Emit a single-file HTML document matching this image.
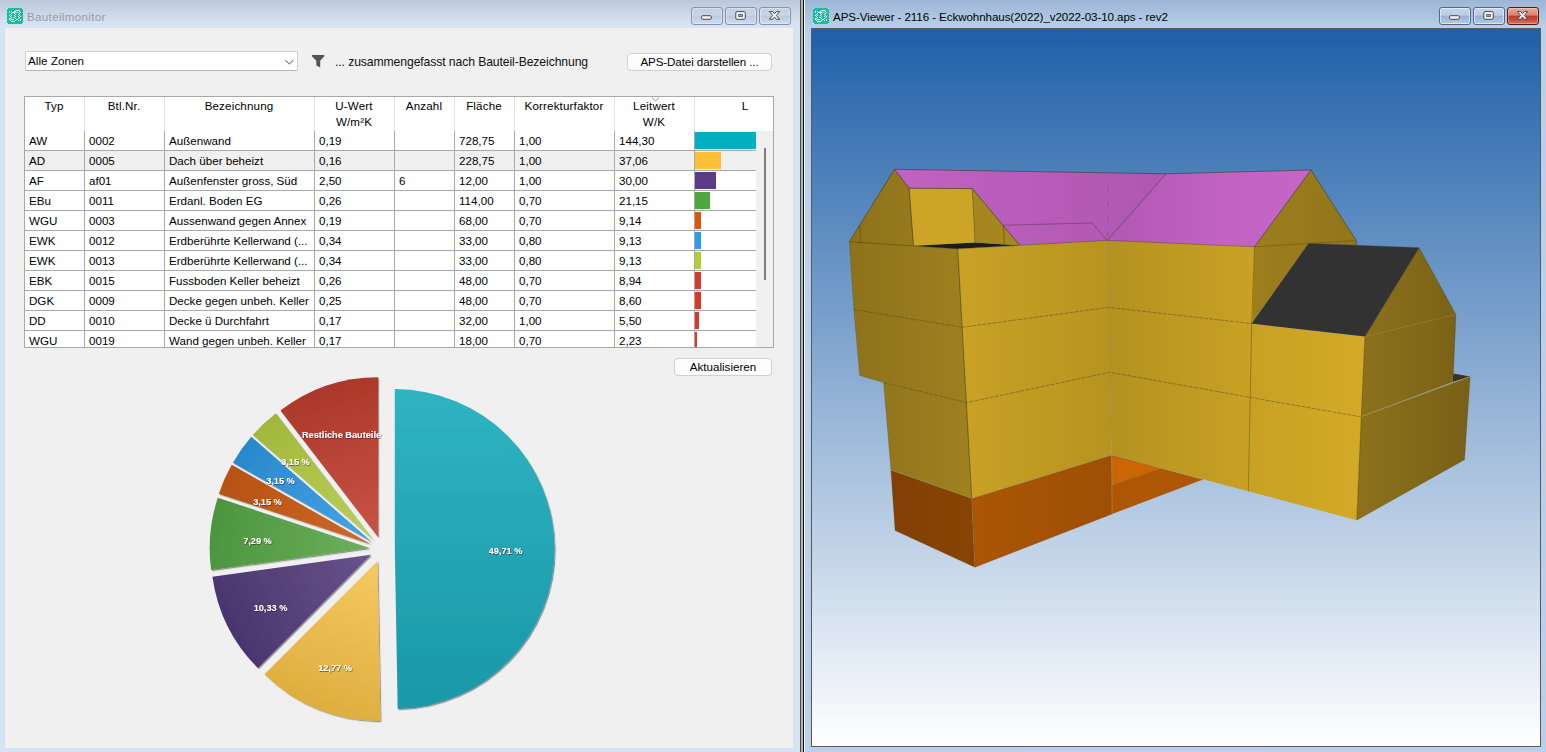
<!DOCTYPE html>
<html><head><meta charset="utf-8"><title>Bauteilmonitor</title>
<style>
*{box-sizing:border-box;margin:0;padding:0}
html,body{width:1546px;height:752px;overflow:hidden;background:#d6e3f3;font-family:"Liberation Sans",sans-serif;font-size:11.6px;color:#000}
.abs{position:absolute}
#lw{position:absolute;left:0;top:0;width:800px;height:752px;background:#d6e3f3}
#lw .tb{position:absolute;left:0;top:0;width:800px;height:28px;background:linear-gradient(#b9c7d9,#cfdbea 55%,#d9e5f4)}
#lw .ct{position:absolute;left:5px;top:28px;width:788px;height:720px;background:#f0f0f0}
.title{position:absolute;top:9px;font-size:11.6px;line-height:15px;white-space:nowrap}
#sep{position:absolute;left:800px;top:0;width:5px;height:752px;background:linear-gradient(90deg,#4a4a4a 0,#4a4a4a 1px,#b2b2b2 1px,#b2b2b2 3px,#111 3px,#111 4px,#f4f6fa 4px)}
#rw{position:absolute;left:805px;top:0;width:741px;height:752px;background:linear-gradient(#9db6d6,#b9cfea 28px,#bad0ea)}
#view{position:absolute;left:811px;top:28px;width:730px;height:719px;border:1px solid #5a5a5a}
.wb{position:absolute;top:7px;width:32px;height:18px;border:1px solid #8591b4;border-radius:3px;background:linear-gradient(#c4d0e2,#c9d5e6 45%,#bccadf 50%,#d0dcec);box-shadow:inset 0 0 0 1px rgba(255,255,255,.35)}
.wb svg{position:absolute;left:-1px;top:-1px}
.wb.act{border-color:#5b6480;background:linear-gradient(#c3d4ea,#bccee6 45%,#9ab2d2 50%,#b4c9e3);box-shadow:inset 0 0 0 1px rgba(255,255,255,.55)}
.wb.cls{border-color:#5a1420;background:linear-gradient(#e8a898,#da826e 45%,#bc3b23 50%,#c24a33 70%,#d07762);box-shadow:inset 0 0 0 1px rgba(255,255,255,.3)}
.combo{position:absolute;left:25px;top:51px;width:273px;height:20px;background:#fff;border:1px solid #cfcfcf;border-bottom-color:#b5b5b5;border-radius:2px;line-height:18px;padding-left:2px;font-size:11.6px;letter-spacing:.07px}
.btn{position:absolute;background:#fdfdfd;border:1px solid #d0d0d0;border-radius:4px;text-align:center;font-size:11.6px;white-space:nowrap}
.lbl{position:absolute;left:335px;top:55px;font-size:12.2px;letter-spacing:-.1px;line-height:15px;white-space:nowrap;color:#111}
.tbl{position:absolute;left:24px;top:96px;width:750px;height:252px;background:#fff;border:1px solid #a8a8a8;overflow:hidden}
.tbl>*{position:absolute}
.th{top:-1px;height:35px;text-align:center;line-height:16px;padding-top:2px;font-size:11.6px;letter-spacing:.15px;white-space:nowrap}
.hsep{top:0;width:1px;height:34px;background:#e4e4e4}
.tr{left:-1px;width:733px;height:20px;border-bottom:1px solid #a9a9a9}
.tr.hov{background:#f0f0f0}
.tr>*{position:absolute}
.td{top:0;height:19px;line-height:19px;padding-left:5px;white-space:nowrap;overflow:hidden;font-size:11.6px}
.bar{top:1px;height:17px}
.vsep{top:34px;width:1px;height:220px;background:#a9a9a9}
.sb{left:731px;top:34px;width:17px;height:217px;background:#f0f0f0}
.thumb{position:absolute;left:8px;top:17px;width:2px;height:132px;background:#7c7c7c}
.pl{font-family:"Liberation Sans",sans-serif;font-weight:bold;font-size:9.2px;fill:#fff;text-anchor:middle;filter:url(#tsh)}
</style></head><body>
<div id="lw">
<div class="tb"></div>
<div class="abs" style="left:7px;top:8px;width:16px;height:16px"><svg width="16" height="16" viewBox="0 0 16 16" shape-rendering="crispEdges"><rect x="0" y="0" width="16" height="16" fill="#1cbc9e"/><rect x="9" y="2" width="1" height="1" fill="#fff" fill-opacity="0.92"/><rect x="10" y="2" width="1" height="1" fill="#fff" fill-opacity="0.92"/><rect x="11" y="2" width="1" height="1" fill="#fff" fill-opacity="0.92"/><rect x="2" y="3" width="1" height="1" fill="#fff" fill-opacity="0.92"/><rect x="4" y="3" width="1" height="1" fill="#fff" fill-opacity="0.92"/><rect x="7" y="3" width="1" height="1" fill="#fff" fill-opacity="0.92"/><rect x="12" y="3" width="1" height="1" fill="#fff" fill-opacity="0.92"/><rect x="5" y="4" width="1" height="1" fill="#fff" fill-opacity="0.92"/><rect x="6" y="4" width="1" height="1" fill="#fff" fill-opacity="0.92"/><rect x="7" y="4" width="1" height="1" fill="#fff" fill-opacity="0.92"/><rect x="13" y="4" width="1" height="1" fill="#fff" fill-opacity="0.92"/><rect x="4" y="5" width="1" height="1" fill="#fff" fill-opacity="0.92"/><rect x="7" y="5" width="1" height="1" fill="#fff" fill-opacity="0.92"/><rect x="12" y="5" width="1" height="1" fill="#fff" fill-opacity="0.92"/><rect x="3" y="6" width="1" height="1" fill="#fff" fill-opacity="0.92"/><rect x="8" y="6" width="1" height="1" fill="#fff" fill-opacity="0.92"/><rect x="11" y="6" width="1" height="1" fill="#fff" fill-opacity="0.92"/><rect x="2" y="7" width="1" height="1" fill="#fff" fill-opacity="0.92"/><rect x="4" y="7" width="1" height="1" fill="#fff" fill-opacity="0.92"/><rect x="7" y="7" width="1" height="1" fill="#fff" fill-opacity="0.92"/><rect x="12" y="7" width="1" height="1" fill="#fff" fill-opacity="0.92"/><rect x="3" y="8" width="1" height="1" fill="#fff" fill-opacity="0.92"/><rect x="8" y="8" width="1" height="1" fill="#fff" fill-opacity="0.92"/><rect x="11" y="8" width="1" height="1" fill="#fff" fill-opacity="0.92"/><rect x="13" y="8" width="1" height="1" fill="#fff" fill-opacity="0.92"/><rect x="4" y="9" width="1" height="1" fill="#fff" fill-opacity="0.92"/><rect x="6" y="9" width="1" height="1" fill="#fff" fill-opacity="0.92"/><rect x="7" y="9" width="1" height="1" fill="#fff" fill-opacity="0.92"/><rect x="12" y="9" width="1" height="1" fill="#fff" fill-opacity="0.92"/><rect x="2" y="10" width="1" height="1" fill="#fff" fill-opacity="0.92"/><rect x="3" y="10" width="1" height="1" fill="#fff" fill-opacity="0.92"/><rect x="8" y="10" width="1" height="1" fill="#fff" fill-opacity="0.92"/><rect x="11" y="10" width="1" height="1" fill="#fff" fill-opacity="0.92"/><rect x="2" y="11" width="1" height="1" fill="#fff" fill-opacity="0.92"/><rect x="4" y="11" width="1" height="1" fill="#fff" fill-opacity="0.92"/><rect x="5" y="11" width="1" height="1" fill="#fff" fill-opacity="0.92"/><rect x="6" y="11" width="1" height="1" fill="#fff" fill-opacity="0.92"/><rect x="9" y="11" width="1" height="1" fill="#fff" fill-opacity="0.92"/><rect x="10" y="11" width="1" height="1" fill="#fff" fill-opacity="0.92"/><rect x="13" y="11" width="1" height="1" fill="#fff" fill-opacity="0.92"/><rect x="3" y="12" width="1" height="1" fill="#fff" fill-opacity="0.92"/><rect x="8" y="12" width="1" height="1" fill="#fff" fill-opacity="0.92"/><rect x="11" y="12" width="1" height="1" fill="#fff" fill-opacity="0.92"/><rect x="13" y="12" width="1" height="1" fill="#fff" fill-opacity="0.92"/><rect x="4" y="13" width="1" height="1" fill="#fff" fill-opacity="0.92"/><rect x="5" y="13" width="1" height="1" fill="#fff" fill-opacity="0.92"/><rect x="6" y="13" width="1" height="1" fill="#fff" fill-opacity="0.92"/><rect x="7" y="13" width="1" height="1" fill="#fff" fill-opacity="0.92"/><rect x="8" y="3" width="1" height="1" fill="#fff" fill-opacity="0.55"/><rect x="2" y="4" width="1" height="1" fill="#fff" fill-opacity="0.55"/><rect x="8" y="4" width="1" height="1" fill="#fff" fill-opacity="0.55"/><rect x="9" y="4" width="1" height="1" fill="#fff" fill-opacity="0.55"/><rect x="10" y="4" width="1" height="1" fill="#fff" fill-opacity="0.55"/><rect x="11" y="4" width="1" height="1" fill="#fff" fill-opacity="0.55"/><rect x="8" y="2" width="1" height="1" fill="#fff" fill-opacity="0.55"/><rect x="12" y="2" width="1" height="1" fill="#fff" fill-opacity="0.55"/><rect x="0" y="0" width="1" height="1" fill="#f0f4fa"/><rect x="15" y="0" width="1" height="1" fill="#f0f4fa"/><rect x="0" y="15" width="1" height="1" fill="#f0f4fa"/><rect x="15" y="15" width="1" height="1" fill="#f0f4fa"/></svg></div>
<div class="title" style="left:27px;color:#9a9a9a;letter-spacing:.33px">Bauteilmonitor</div>
<div class="wb" style="left:691px"><svg width="32" height="18" viewBox="0 0 32 18"><rect x="10.6" y="8.7" width="9.7" height="3.6" rx="1" fill="#f4f4f4" stroke="#45485a" stroke-width="1"/></svg></div>
<div class="wb" style="left:725px"><svg width="32" height="18" viewBox="0 0 32 18"><rect x="10.8" y="4.6" width="9.5" height="7.7" rx="1" fill="#f4f4f4" stroke="#45485a" stroke-width="1"/><rect x="13.7" y="7.6" width="3.7" height="1.9" fill="#8fa3c4" stroke="#45485a" stroke-width="0.8"/></svg></div>
<div class="wb" style="left:759px"><svg width="32" height="18" viewBox="0 0 32 18"><path d="M10.4,4.6 L13.7,4.6 L15.5,6.8 L17.3,4.6 L20.6,4.6 L17.4,8.45 L20.6,12.3 L17.3,12.3 L15.5,10.1 L13.7,12.3 L10.4,12.3 L13.6,8.45 Z" fill="#f4f4f4" stroke="#45485a" stroke-width="1" stroke-linejoin="round"/></svg></div>
<div class="ct"></div>
<div class="combo">Alle Zonen<svg class="abs" style="left:258px;top:7px" width="11" height="7" viewBox="0 0 11 7"><path d="M1.2,1 L5.3,5 L9.4,1" fill="none" stroke="#444" stroke-width="1"/></svg></div>
<svg class="abs" style="left:311px;top:54px" width="14" height="15" viewBox="0 0 14 15"><path d="M0.9,1 L13.3,1 L13.3,2.2 L9.2,6.8 L9.2,13.6 L5.3,11.4 L5.3,6.8 L0.9,2.2 Z" fill="#555"/></svg>
<div class="lbl">... zusammengefasst nach Bauteil-Bezeichnung</div>
<div class="btn" style="left:627px;top:53px;width:145px;height:18px;line-height:16px;letter-spacing:-.1px">APS-Datei darstellen ...</div>
<div class="tbl">
<div class="th" style="left:-1px;width:60px">Typ</div>
<div class="th" style="left:59px;width:80px">Btl.Nr.</div>
<div class="hsep" style="left:59px"></div>
<div class="th" style="left:139px;width:150px">Bezeichnung</div>
<div class="hsep" style="left:139px"></div>
<div class="th" style="left:289px;width:80px">U-Wert<br>W/m²K</div>
<div class="hsep" style="left:289px"></div>
<div class="th" style="left:369px;width:60px">Anzahl</div>
<div class="hsep" style="left:369px"></div>
<div class="th" style="left:429px;width:60px">Fläche</div>
<div class="hsep" style="left:429px"></div>
<div class="th" style="left:489px;width:100px">Korrekturfaktor</div>
<div class="hsep" style="left:489px"></div>
<div class="th" style="left:589px;width:80px">Leitwert<br>W/K</div>
<div class="hsep" style="left:589px"></div>
<div class="th" style="left:669px;width:102px">L</div>
<div class="hsep" style="left:669px"></div>
<svg style="left:625.5px;top:0px" width="9" height="5" viewBox="0 0 9 5"><path d="M0.8,0.6 L4.5,4 L8.2,0.6" fill="none" stroke="#8a8a8a" stroke-width="0.9"/></svg>
<div class="tr" style="top:34px">
<div class="td" style="left:0px;width:59px">AW</div>
<div class="td" style="left:60px;width:79px">0002</div>
<div class="td" style="left:140px;width:149px">Außenwand</div>
<div class="td" style="left:290px;width:79px">0,19</div>
<div class="td" style="left:370px;width:59px"></div>
<div class="td" style="left:430px;width:59px">728,75</div>
<div class="td" style="left:490px;width:99px">1,00</div>
<div class="td" style="left:590px;width:79px">144,30</div>
<div class="bar" style="left:671px;width:61.5px;background:#00b0c0"></div>
</div>
<div class="tr hov" style="top:54px">
<div class="td" style="left:0px;width:59px">AD</div>
<div class="td" style="left:60px;width:79px">0005</div>
<div class="td" style="left:140px;width:149px">Dach über beheizt</div>
<div class="td" style="left:290px;width:79px">0,16</div>
<div class="td" style="left:370px;width:59px"></div>
<div class="td" style="left:430px;width:59px">228,75</div>
<div class="td" style="left:490px;width:99px">1,00</div>
<div class="td" style="left:590px;width:79px">37,06</div>
<div class="bar" style="left:671px;width:25.8px;background:#fdbf35"></div>
</div>
<div class="tr" style="top:74px">
<div class="td" style="left:0px;width:59px">AF</div>
<div class="td" style="left:60px;width:79px">af01</div>
<div class="td" style="left:140px;width:149px">Außenfenster gross, Süd</div>
<div class="td" style="left:290px;width:79px">2,50</div>
<div class="td" style="left:370px;width:59px">6</div>
<div class="td" style="left:430px;width:59px">12,00</div>
<div class="td" style="left:490px;width:99px">1,00</div>
<div class="td" style="left:590px;width:79px">30,00</div>
<div class="bar" style="left:671px;width:20.6px;background:#5a3b84"></div>
</div>
<div class="tr" style="top:94px">
<div class="td" style="left:0px;width:59px">EBu</div>
<div class="td" style="left:60px;width:79px">0011</div>
<div class="td" style="left:140px;width:149px">Erdanl. Boden EG</div>
<div class="td" style="left:290px;width:79px">0,26</div>
<div class="td" style="left:370px;width:59px"></div>
<div class="td" style="left:430px;width:59px">114,00</div>
<div class="td" style="left:490px;width:99px">0,70</div>
<div class="td" style="left:590px;width:79px">21,15</div>
<div class="bar" style="left:671px;width:14.6px;background:#4ca73c"></div>
</div>
<div class="tr" style="top:114px">
<div class="td" style="left:0px;width:59px">WGU</div>
<div class="td" style="left:60px;width:79px">0003</div>
<div class="td" style="left:140px;width:149px">Aussenwand gegen Annex</div>
<div class="td" style="left:290px;width:79px">0,19</div>
<div class="td" style="left:370px;width:59px"></div>
<div class="td" style="left:430px;width:59px">68,00</div>
<div class="td" style="left:490px;width:99px">0,70</div>
<div class="td" style="left:590px;width:79px">9,14</div>
<div class="bar" style="left:671px;width:6.0px;background:#d9590c"></div>
</div>
<div class="tr" style="top:134px">
<div class="td" style="left:0px;width:59px">EWK</div>
<div class="td" style="left:60px;width:79px">0012</div>
<div class="td" style="left:140px;width:149px">Erdberührte Kellerwand (...</div>
<div class="td" style="left:290px;width:79px">0,34</div>
<div class="td" style="left:370px;width:59px"></div>
<div class="td" style="left:430px;width:59px">33,00</div>
<div class="td" style="left:490px;width:99px">0,80</div>
<div class="td" style="left:590px;width:79px">9,13</div>
<div class="bar" style="left:671px;width:6.0px;background:#2e9be6"></div>
</div>
<div class="tr" style="top:154px">
<div class="td" style="left:0px;width:59px">EWK</div>
<div class="td" style="left:60px;width:79px">0013</div>
<div class="td" style="left:140px;width:149px">Erdberührte Kellerwand (...</div>
<div class="td" style="left:290px;width:79px">0,34</div>
<div class="td" style="left:370px;width:59px"></div>
<div class="td" style="left:430px;width:59px">33,00</div>
<div class="td" style="left:490px;width:99px">0,80</div>
<div class="td" style="left:590px;width:79px">9,13</div>
<div class="bar" style="left:671px;width:6.0px;background:#b4cd32"></div>
</div>
<div class="tr" style="top:174px">
<div class="td" style="left:0px;width:59px">EBK</div>
<div class="td" style="left:60px;width:79px">0015</div>
<div class="td" style="left:140px;width:149px">Fussboden Keller beheizt</div>
<div class="td" style="left:290px;width:79px">0,26</div>
<div class="td" style="left:370px;width:59px"></div>
<div class="td" style="left:430px;width:59px">48,00</div>
<div class="td" style="left:490px;width:99px">0,70</div>
<div class="td" style="left:590px;width:79px">8,94</div>
<div class="bar" style="left:671px;width:5.8px;background:#d63b2a"></div>
</div>
<div class="tr" style="top:194px">
<div class="td" style="left:0px;width:59px">DGK</div>
<div class="td" style="left:60px;width:79px">0009</div>
<div class="td" style="left:140px;width:149px">Decke gegen unbeh. Keller</div>
<div class="td" style="left:290px;width:79px">0,25</div>
<div class="td" style="left:370px;width:59px"></div>
<div class="td" style="left:430px;width:59px">48,00</div>
<div class="td" style="left:490px;width:99px">0,70</div>
<div class="td" style="left:590px;width:79px">8,60</div>
<div class="bar" style="left:671px;width:5.8px;background:#d63b2a"></div>
</div>
<div class="tr" style="top:214px">
<div class="td" style="left:0px;width:59px">DD</div>
<div class="td" style="left:60px;width:79px">0010</div>
<div class="td" style="left:140px;width:149px">Decke ü Durchfahrt</div>
<div class="td" style="left:290px;width:79px">0,17</div>
<div class="td" style="left:370px;width:59px"></div>
<div class="td" style="left:430px;width:59px">32,00</div>
<div class="td" style="left:490px;width:99px">1,00</div>
<div class="td" style="left:590px;width:79px">5,50</div>
<div class="bar" style="left:671px;width:4.0px;background:#d63b2a"></div>
</div>
<div class="tr" style="top:234px">
<div class="td" style="left:0px;width:59px">WGU</div>
<div class="td" style="left:60px;width:79px">0019</div>
<div class="td" style="left:140px;width:149px">Wand gegen unbeh. Keller</div>
<div class="td" style="left:290px;width:79px">0,17</div>
<div class="td" style="left:370px;width:59px"></div>
<div class="td" style="left:430px;width:59px">18,00</div>
<div class="td" style="left:490px;width:99px">0,70</div>
<div class="td" style="left:590px;width:79px">2,23</div>
<div class="bar" style="left:671px;width:2.0px;background:#d63b2a"></div>
</div>
<div class="vsep" style="left:59px"></div>
<div class="vsep" style="left:139px"></div>
<div class="vsep" style="left:289px"></div>
<div class="vsep" style="left:369px"></div>
<div class="vsep" style="left:429px"></div>
<div class="vsep" style="left:489px"></div>
<div class="vsep" style="left:589px"></div>
<div class="vsep" style="left:669px"></div>
<div class="sb"><div class="thumb"></div></div>
</div>
<div class="btn" style="left:674px;top:358px;width:98px;height:18px;line-height:16px">Aktualisieren</div>
<svg class="abs" style="left:0;top:0" width="800" height="752" viewBox="0 0 800 752">
<defs><linearGradient id="pg0" gradientUnits="userSpaceOnUse" x1="394.8" y1="389.1" x2="394.8" y2="709.1"><stop offset="0" stop-color="#2fb4c1"/><stop offset="1" stop-color="#1a98a7"/></linearGradient><linearGradient id="pg1" gradientUnits="userSpaceOnUse" x1="317.7" y1="709.3" x2="377.5" y2="560.9"><stop offset="0" stop-color="#deae3e"/><stop offset="1" stop-color="#f6ca62"/></linearGradient><linearGradient id="pg2" gradientUnits="userSpaceOnUse" x1="227.7" y1="626.2" x2="370.9" y2="554.8"><stop offset="0" stop-color="#4a356e"/><stop offset="1" stop-color="#6a538c"/></linearGradient><linearGradient id="pg3" gradientUnits="userSpaceOnUse" x1="210.3" y1="533.4" x2="369.7" y2="548.0"><stop offset="0" stop-color="#4c953e"/><stop offset="1" stop-color="#6db05c"/></linearGradient><linearGradient id="pg4" gradientUnits="userSpaceOnUse" x1="224.6" y1="478.9" x2="370.7" y2="544.1"><stop offset="0" stop-color="#b65212"/><stop offset="1" stop-color="#cf6a28"/></linearGradient><linearGradient id="pg5" gradientUnits="userSpaceOnUse" x1="241.5" y1="449.3" x2="371.9" y2="541.9"><stop offset="0" stop-color="#2a88cc"/><stop offset="1" stop-color="#45a5e6"/></linearGradient><linearGradient id="pg6" gradientUnits="userSpaceOnUse" x1="263.8" y1="423.6" x2="373.6" y2="540.0"><stop offset="0" stop-color="#a2b83c"/><stop offset="1" stop-color="#bcd05a"/></linearGradient><linearGradient id="pg7" gradientUnits="userSpaceOnUse" x1="326.5" y1="385.8" x2="378.1" y2="537.3"><stop offset="0" stop-color="#ab382a"/><stop offset="1" stop-color="#c95445"/></linearGradient><filter id="tsh" x="-10%" y="-30%" width="120%" height="160%"><feDropShadow dx="0.6" dy="0.7" stdDeviation="0.35" flood-color="#3a1a1a" flood-opacity="0.75"/></filter><filter id="psh" x="-10%" y="-10%" width="120%" height="120%"><feDropShadow dx="1.1" dy="1.2" stdDeviation="0.7" flood-color="#000" flood-opacity="0.4"/></filter></defs>
<path d="M394.80,549.09 L394.80,389.09 A160.0,160.0 0 0 1 397.71,709.06 Z" fill="url(#pg0)" filter="url(#psh)"/>
<path d="M377.49,560.89 L380.41,720.86 A160.0,160.0 0 0 1 264.50,674.17 Z" fill="url(#pg1)" filter="url(#psh)"/>
<path d="M370.92,554.82 L257.93,668.10 A160.0,160.0 0 0 1 212.43,576.76 Z" fill="url(#pg2)" filter="url(#psh)"/>
<path d="M369.65,548.05 L211.16,570.00 A160.0,160.0 0 0 1 217.80,497.65 Z" fill="url(#pg3)" filter="url(#psh)"/>
<path d="M370.69,544.07 L218.84,493.67 A160.0,160.0 0 0 1 231.71,464.80 Z" fill="url(#pg4)" filter="url(#psh)"/>
<path d="M371.93,541.91 L232.94,462.63 A160.0,160.0 0 0 1 251.25,436.85 Z" fill="url(#pg5)" filter="url(#psh)"/>
<path d="M373.56,540.03 L252.88,434.97 A160.0,160.0 0 0 1 275.89,413.30 Z" fill="url(#pg6)" filter="url(#psh)"/>
<path d="M378.14,537.27 L280.47,410.54 A160.0,160.0 0 0 1 378.14,377.27 Z" fill="url(#pg7)" filter="url(#psh)"/>
<text class="pl" x="505.5" y="553.7">49,71 %</text>
<text class="pl" x="335" y="670.7">12,77 %</text>
<text class="pl" x="270.5" y="610.7">10,33 %</text>
<text class="pl" x="257.5" y="543.7">7,29 %</text>
<text class="pl" x="267.5" y="504.7">3,15 %</text>
<text class="pl" x="280.5" y="484.2">3,15 %</text>
<text class="pl" x="295.5" y="464.7">3,15 %</text>
<text class="pl" x="341.5" y="437.7">Restliche Bauteile</text>
</svg>
</div>
<div id="sep"></div>
<div id="rw">
<div class="abs" style="left:8px;top:8px;width:16px;height:16px"><svg width="16" height="16" viewBox="0 0 16 16" shape-rendering="crispEdges"><rect x="0" y="0" width="16" height="16" fill="#1cbc9e"/><rect x="9" y="2" width="1" height="1" fill="#fff" fill-opacity="0.92"/><rect x="10" y="2" width="1" height="1" fill="#fff" fill-opacity="0.92"/><rect x="11" y="2" width="1" height="1" fill="#fff" fill-opacity="0.92"/><rect x="2" y="3" width="1" height="1" fill="#fff" fill-opacity="0.92"/><rect x="4" y="3" width="1" height="1" fill="#fff" fill-opacity="0.92"/><rect x="7" y="3" width="1" height="1" fill="#fff" fill-opacity="0.92"/><rect x="12" y="3" width="1" height="1" fill="#fff" fill-opacity="0.92"/><rect x="5" y="4" width="1" height="1" fill="#fff" fill-opacity="0.92"/><rect x="6" y="4" width="1" height="1" fill="#fff" fill-opacity="0.92"/><rect x="7" y="4" width="1" height="1" fill="#fff" fill-opacity="0.92"/><rect x="13" y="4" width="1" height="1" fill="#fff" fill-opacity="0.92"/><rect x="4" y="5" width="1" height="1" fill="#fff" fill-opacity="0.92"/><rect x="7" y="5" width="1" height="1" fill="#fff" fill-opacity="0.92"/><rect x="12" y="5" width="1" height="1" fill="#fff" fill-opacity="0.92"/><rect x="3" y="6" width="1" height="1" fill="#fff" fill-opacity="0.92"/><rect x="8" y="6" width="1" height="1" fill="#fff" fill-opacity="0.92"/><rect x="11" y="6" width="1" height="1" fill="#fff" fill-opacity="0.92"/><rect x="2" y="7" width="1" height="1" fill="#fff" fill-opacity="0.92"/><rect x="4" y="7" width="1" height="1" fill="#fff" fill-opacity="0.92"/><rect x="7" y="7" width="1" height="1" fill="#fff" fill-opacity="0.92"/><rect x="12" y="7" width="1" height="1" fill="#fff" fill-opacity="0.92"/><rect x="3" y="8" width="1" height="1" fill="#fff" fill-opacity="0.92"/><rect x="8" y="8" width="1" height="1" fill="#fff" fill-opacity="0.92"/><rect x="11" y="8" width="1" height="1" fill="#fff" fill-opacity="0.92"/><rect x="13" y="8" width="1" height="1" fill="#fff" fill-opacity="0.92"/><rect x="4" y="9" width="1" height="1" fill="#fff" fill-opacity="0.92"/><rect x="6" y="9" width="1" height="1" fill="#fff" fill-opacity="0.92"/><rect x="7" y="9" width="1" height="1" fill="#fff" fill-opacity="0.92"/><rect x="12" y="9" width="1" height="1" fill="#fff" fill-opacity="0.92"/><rect x="2" y="10" width="1" height="1" fill="#fff" fill-opacity="0.92"/><rect x="3" y="10" width="1" height="1" fill="#fff" fill-opacity="0.92"/><rect x="8" y="10" width="1" height="1" fill="#fff" fill-opacity="0.92"/><rect x="11" y="10" width="1" height="1" fill="#fff" fill-opacity="0.92"/><rect x="2" y="11" width="1" height="1" fill="#fff" fill-opacity="0.92"/><rect x="4" y="11" width="1" height="1" fill="#fff" fill-opacity="0.92"/><rect x="5" y="11" width="1" height="1" fill="#fff" fill-opacity="0.92"/><rect x="6" y="11" width="1" height="1" fill="#fff" fill-opacity="0.92"/><rect x="9" y="11" width="1" height="1" fill="#fff" fill-opacity="0.92"/><rect x="10" y="11" width="1" height="1" fill="#fff" fill-opacity="0.92"/><rect x="13" y="11" width="1" height="1" fill="#fff" fill-opacity="0.92"/><rect x="3" y="12" width="1" height="1" fill="#fff" fill-opacity="0.92"/><rect x="8" y="12" width="1" height="1" fill="#fff" fill-opacity="0.92"/><rect x="11" y="12" width="1" height="1" fill="#fff" fill-opacity="0.92"/><rect x="13" y="12" width="1" height="1" fill="#fff" fill-opacity="0.92"/><rect x="4" y="13" width="1" height="1" fill="#fff" fill-opacity="0.92"/><rect x="5" y="13" width="1" height="1" fill="#fff" fill-opacity="0.92"/><rect x="6" y="13" width="1" height="1" fill="#fff" fill-opacity="0.92"/><rect x="7" y="13" width="1" height="1" fill="#fff" fill-opacity="0.92"/><rect x="8" y="3" width="1" height="1" fill="#fff" fill-opacity="0.55"/><rect x="2" y="4" width="1" height="1" fill="#fff" fill-opacity="0.55"/><rect x="8" y="4" width="1" height="1" fill="#fff" fill-opacity="0.55"/><rect x="9" y="4" width="1" height="1" fill="#fff" fill-opacity="0.55"/><rect x="10" y="4" width="1" height="1" fill="#fff" fill-opacity="0.55"/><rect x="11" y="4" width="1" height="1" fill="#fff" fill-opacity="0.55"/><rect x="8" y="2" width="1" height="1" fill="#fff" fill-opacity="0.55"/><rect x="12" y="2" width="1" height="1" fill="#fff" fill-opacity="0.55"/><rect x="0" y="0" width="1" height="1" fill="#f0f4fa"/><rect x="15" y="0" width="1" height="1" fill="#f0f4fa"/><rect x="0" y="15" width="1" height="1" fill="#f0f4fa"/><rect x="15" y="15" width="1" height="1" fill="#f0f4fa"/></svg></div>
<div class="title" style="left:28px;color:#000;letter-spacing:-.085px">APS-Viewer - 2116 - Eckwohnhaus(2022)_v2022-03-10.aps - rev2</div>
</div>
<div class="wb act" style="left:1439px"><svg width="32" height="18" viewBox="0 0 32 18"><rect x="10.6" y="8.7" width="9.7" height="3.6" rx="1" fill="#f4f4f4" stroke="#45485a" stroke-width="1"/></svg></div>
<div class="wb act" style="left:1473px"><svg width="32" height="18" viewBox="0 0 32 18"><rect x="10.8" y="4.6" width="9.5" height="7.7" rx="1" fill="#f4f4f4" stroke="#45485a" stroke-width="1"/><rect x="13.7" y="7.6" width="3.7" height="1.9" fill="#8fa3c4" stroke="#45485a" stroke-width="0.8"/></svg></div>
<div class="wb act cls" style="left:1507px"><svg width="32" height="18" viewBox="0 0 32 18"><path d="M10.4,4.6 L13.7,4.6 L15.5,6.8 L17.3,4.6 L20.6,4.6 L17.4,8.45 L20.6,12.3 L17.3,12.3 L15.5,10.1 L13.7,12.3 L10.4,12.3 L13.6,8.45 Z" fill="#f4f4f4" stroke="#45485a" stroke-width="1" stroke-linejoin="round"/></svg></div>
<div id="view"><svg class="abs" style="left:-812px;top:-29px" width="1546" height="752" viewBox="0 0 1546 752">
<rect x="812" y="29" width="728" height="717" fill="url(#sky)"/>
<defs>
<linearGradient id="sky" x1="0" y1="0" x2="0" y2="1"><stop offset="0" stop-color="#1f60a9"/><stop offset="1" stop-color="#ffffff"/></linearGradient>
<linearGradient id="gLeft" gradientUnits="userSpaceOnUse" x1="850" y1="0" x2="972" y2="0"><stop offset="0" stop-color="#8d721b"/><stop offset="1" stop-color="#a08120"/></linearGradient>
<linearGradient id="gFL" gradientUnits="userSpaceOnUse" x1="958" y1="0" x2="1110" y2="0"><stop offset="0" stop-color="#c9a225"/><stop offset="1" stop-color="#b79420"/></linearGradient>
<linearGradient id="gFR" gradientUnits="userSpaceOnUse" x1="1108" y1="0" x2="1252" y2="0"><stop offset="0" stop-color="#b49120"/><stop offset="1" stop-color="#c9a224"/></linearGradient>
<linearGradient id="gAF" gradientUnits="userSpaceOnUse" x1="1250" y1="0" x2="1362" y2="0"><stop offset="0" stop-color="#c8a124"/><stop offset="1" stop-color="#d2aa27"/></linearGradient>
<linearGradient id="gAS" gradientUnits="userSpaceOnUse" x1="1358" y1="0" x2="1470" y2="0"><stop offset="0" stop-color="#8d711b"/><stop offset="1" stop-color="#786017"/></linearGradient>
<linearGradient id="gMG" gradientUnits="userSpaceOnUse" x1="1254" y1="0" x2="1356" y2="0"><stop offset="0" stop-color="#9c7e1d"/><stop offset="1" stop-color="#93761b"/></linearGradient>
<linearGradient id="gP1" gradientUnits="userSpaceOnUse" x1="895" y1="0" x2="1166" y2="0"><stop offset="0" stop-color="#c162c2"/><stop offset="1" stop-color="#ae57b0"/></linearGradient>
<linearGradient id="gP2" gradientUnits="userSpaceOnUse" x1="1107" y1="0" x2="1311" y2="0"><stop offset="0" stop-color="#b058b2"/><stop offset="0.6" stop-color="#c263c4"/><stop offset="1" stop-color="#c566c7"/></linearGradient>
<linearGradient id="gOL" gradientUnits="userSpaceOnUse" x1="890" y1="0" x2="975" y2="0"><stop offset="0" stop-color="#804003"/><stop offset="1" stop-color="#884404"/></linearGradient>
<linearGradient id="gOF" gradientUnits="userSpaceOnUse" x1="972" y1="0" x2="1112" y2="0"><stop offset="0" stop-color="#ab5604"/><stop offset="1" stop-color="#9d4f04"/></linearGradient>
</defs>
<polygon points="1111.7,455.1 1203.0,479.6 1112.1,514.0" fill="#ad5704" />
<polygon points="1111.9,456.0 1160.0,468.6 1112.0,485.0" fill="#cc6605" />
<polygon points="890.9,470.0 971.7,498.3 974.9,567.2 895.1,530.6" fill="url(#gOL)" />
<polygon points="971.7,498.3 1111.7,455.1 1112.1,514.0 974.9,567.2" fill="url(#gOF)" />
<polygon points="894.5,169.3 849.3,241.8 853.8,309.6 859.6,375.5 883.6,382.6 890.9,470.0 971.7,498.3 957.7,248.8 913.5,245.8 909.1,188.2" fill="url(#gLeft)" />
<polygon points="913.5,245.8 975.0,242.6 1004.6,244.4 1019.5,245.1 957.7,248.8" fill="#1c1c1c" />
<polygon points="909.1,188.2 972.3,188.6 975.0,242.6 913.5,245.8" fill="#cda526" />
<polygon points="972.3,188.6 1019.5,245.1 1004.6,244.4 975.0,242.6" fill="#a6861f" />
<polygon points="1254.5,246.8 1310.9,170.0 1356.2,240.4 1356.5,245.3 1308.5,243.4 1251.7,323.6" fill="url(#gMG)" />
<polygon points="894.5,169.3 1166.2,173.8 1107.2,240.4 1019.5,245.1 972.3,188.6 909.1,188.2" fill="url(#gP1)" />
<polygon points="1166.2,173.8 1310.9,170.0 1254.5,246.8 1107.2,240.4" fill="url(#gP2)" />
<polygon points="957.7,248.8 1107.2,240.4 1111.7,455.1 971.7,498.3" fill="url(#gFL)" />
<polygon points="1107.2,240.4 1254.5,246.8 1248.3,491.3 1111.7,455.1" fill="url(#gFR)" />
<polygon points="1453.3,373.4 1470.2,376.6 1452.5,382.0" fill="#3a3424" />
<polygon points="1419.1,247.7 1455.8,314.5 1453.3,373.4 1452.5,382.0 1360.8,416.8 1364.9,336.6" fill="url(#gAS)" />
<polygon points="1360.8,416.8 1470.2,376.6 1464.6,459.8 1356.7,520.2" fill="url(#gAS)" />
<polygon points="1251.7,323.6 1364.9,336.6 1356.7,520.2 1248.3,491.3" fill="url(#gAF)" />
<polygon points="1308.5,243.4 1419.1,247.7 1364.9,336.6 1251.7,323.6" fill="#323232" />
<path d="M849.3,241.8 L894.5,169.3 L1166.2,173.8 L1310.9,170.0 L1356.2,240.4" fill="none" stroke="#33290c" stroke-width="0.7" stroke-opacity="0.7"/>
<path d="M894.5,169.3 L909.1,188.2 L913.5,245.8" fill="none" stroke="#33290c" stroke-width="0.7" stroke-opacity="0.8"/>
<path d="M909.1,188.2 L972.3,188.6 L1019.5,245.1" fill="none" stroke="#33290c" stroke-width="0.7" stroke-opacity="0.8"/>
<path d="M972.3,188.6 L975.0,242.6" fill="none" stroke="#33290c" stroke-width="0.6" stroke-opacity="0.5"/>
<path d="M1003.3,225.2 L1004.6,244.4" fill="none" stroke="#33290c" stroke-width="0.6" stroke-opacity="0.6"/>
<path d="M849.3,241.8 L957.7,248.8" fill="none" stroke="#33290c" stroke-width="0.6" stroke-opacity="0.6"/>
<path d="M859.7,225.2 L860.6,242.4" fill="none" stroke="#33290c" stroke-width="0.6" stroke-opacity="0.6"/>
<path d="M957.7,248.8 L971.7,498.3 L974.9,567.2" fill="none" stroke="#33290c" stroke-width="0.8" stroke-opacity="0.65"/>
<path d="M957.7,248.8 L1107.2,240.4 L1254.5,246.8" fill="none" stroke="#33290c" stroke-width="0.6" stroke-opacity="0.55"/>
<path d="M1166.2,173.8 L1107.2,240.4" fill="none" stroke="#33290c" stroke-width="0.6" stroke-opacity="0.7"/>
<path d="M1003.3,225.2 L1092.0,223.0 L1107.2,240.4" fill="none" stroke="#33290c" stroke-width="0.6" stroke-opacity="0.6"/>
<path d="M1107.6,186.0 L1107.6,240.0" fill="none" stroke="#33290c" stroke-width="0.6" stroke-opacity="0.3" stroke-dasharray="6 9"/>
<path d="M1107.2,240.4 L1111.7,455.1" fill="none" stroke="#6b5613" stroke-width="0.7" stroke-opacity="0.5" stroke-dasharray="1 8"/>
<path d="M1254.5,246.8 L1310.9,170.0" fill="none" stroke="#33290c" stroke-width="0.7" stroke-opacity="0.7"/>
<path d="M1254.5,246.8 L1251.7,323.6 L1248.3,491.3" fill="none" stroke="#5e4c12" stroke-width="0.7" stroke-opacity="0.7"/>
<path d="M1254.5,246.8 L1356.2,240.4" fill="none" stroke="#4a3c0f" stroke-width="0.6" stroke-opacity="0.55"/>
<path d="M1356.2,240.4 L1356.5,245.3" fill="none" stroke="#33290c" stroke-width="0.7" stroke-opacity="0.6"/>
<path d="M1308.5,243.4 L1419.1,247.7 L1455.8,314.5 L1453.3,373.4" fill="none" stroke="#33290c" stroke-width="0.6" stroke-opacity="0.5"/>
<path d="M1419.1,247.7 L1364.9,336.6 L1356.7,520.2" fill="none" stroke="#4a3c0f" stroke-width="0.7" stroke-opacity="0.6"/>
<path d="M1364.9,336.6 L1455.8,314.5" fill="none" stroke="#a9903c" stroke-width="0.6" stroke-opacity="0.7"/>
<path d="M1360.8,416.8 L1470.2,376.6" fill="none" stroke="#b09a52" stroke-width="0.7" stroke-opacity="0.8"/>
<path d="M1470.2,376.6 L1464.6,459.8 L1356.7,520.2" fill="none" stroke="#33290c" stroke-width="0.5" stroke-opacity="0.3"/>
<path d="M853.8,309.6 L962.3,327.2 L1109.1,307.4 L1251.7,323.6" fill="none" stroke="#4c4526" stroke-width="0.6" stroke-opacity="0.8" stroke-dasharray="4 1.2"/>
<path d="M883.6,382.6 L966.6,402.6 L1109.8,372.3 L1250.2,397.4 L1360.8,416.8" fill="none" stroke="#4c4526" stroke-width="0.6" stroke-opacity="0.8" stroke-dasharray="4 1.2"/>
<path d="M849.3,241.8 L853.8,309.6 L859.6,375.5 L883.6,382.6 L890.9,470.0 L895.1,530.6" fill="none" stroke="#33290c" stroke-width="0.5" stroke-opacity="0.35"/>
<path d="M890.9,470.0 L971.7,498.3 L1111.7,455.1" fill="none" stroke="#9a8a50" stroke-width="0.6" stroke-opacity="0.7"/>
<path d="M1111.7,455.1 L1203.0,479.6" fill="none" stroke="#9a8a50" stroke-width="0.5" stroke-opacity="0.5"/>
<path d="M1112.0,485.0 L1160.0,468.6" fill="none" stroke="#a8733a" stroke-width="0.6" stroke-opacity="0.8"/>
<path d="M1111.7,455.1 L1112.1,514.0" fill="none" stroke="#b08a5a" stroke-width="0.7" stroke-opacity="0.8"/>
<path d="M895.1,530.6 L974.9,567.2 L1112.1,514.0" fill="none" stroke="#5a2d02" stroke-width="0.5" stroke-opacity="0.4"/>
<path d="M971.7,498.3 L974.9,567.2" fill="none" stroke="#c9935a" stroke-width="0.7" stroke-opacity="0.7"/>
</svg></div>
</body></html>
